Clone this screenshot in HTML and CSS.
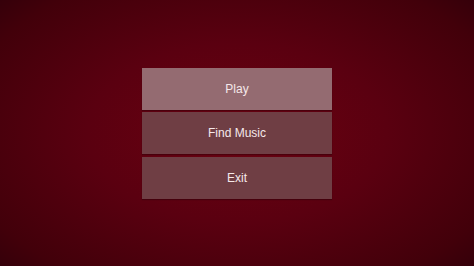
FILE: index.html
```html
<!DOCTYPE html>
<html>
<head>
<meta charset="utf-8">
<link rel="stylesheet" href="styles.css">
</head>
<body>
<main class="screen">
  <nav class="menu">
    <button class="btn btn-active">Play</button>
    <button class="btn">Find Music</button>
    <button class="btn">Exit</button>
  </nav>
</main>
</body>
</html>
```
FILE: styles.css
```css
html, body {
  margin: 0;
  padding: 0;
  width: 474px;
  height: 266px;
  overflow: hidden;
}
.screen {
  width: 474px;
  height: 266px;
  display: flex;
  align-items: center;
  justify-content: center;
  background: radial-gradient(ellipse 70% 75% at 50% 50%, #6c0211 0%, #5a0010 45%, #42000a 85%, #33000a 100%);
}
.menu {
  display: flex;
  flex-direction: column;
  gap: 2.5px;
  width: 190px;
}
.btn {
  height: 42px;
  border: none;
  margin: 0;
  padding: 0;
  background: #6f3e44;
  color: #f5e8ea;
  font-family: "Liberation Sans", Arial, sans-serif;
  font-size: 12px;
  box-shadow: 0 1px 1px rgba(0,0,0,0.25);
}
.btn-active {
  background: #946b71;
}
```
